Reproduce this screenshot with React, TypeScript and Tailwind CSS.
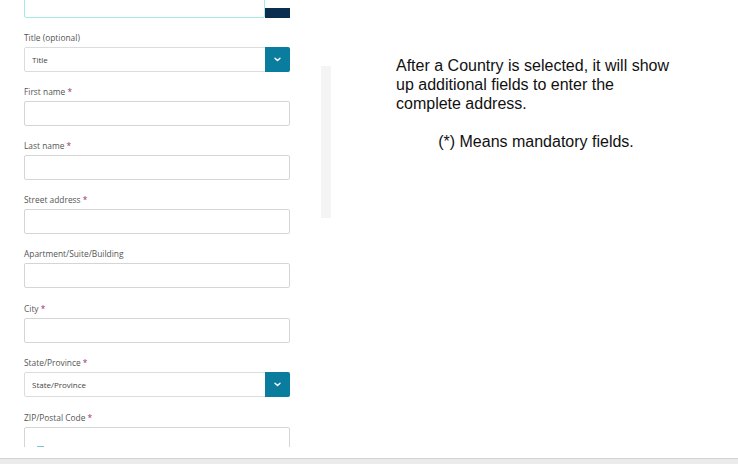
import React from "react";

const Chevron = () => (
  <svg width="7" height="5" viewBox="0 0 7 5" fill="none">
    <path d="M1 1.2 L3.5 3.6 L6 1.2" stroke="#ffffff" strokeWidth="1.4" strokeLinecap="round" strokeLinejoin="round" />
  </svg>
);

const Label = ({ text, req }: { text: string; req?: boolean }) => (
  <div className="h-[13px] pt-[1px] leading-[12px] text-[8.4px] text-[#555] mb-[3px] whitespace-nowrap">
    {text}
    {req && <span className="text-[#a0306e]"> *</span>}
  </div>
);

const Input = ({ children }: { children?: React.ReactNode }) => (
  <div className="relative h-[25px] w-full rounded-[2px] border border-[#d5d5d5] bg-white">{children}</div>
);

const Select = ({ value }: { value: string }) => (
  <div className="flex h-[25px] w-full rounded-[2px] border border-[#dcdcdc] bg-white">
    <div className="flex-1 pl-[7px] text-[8px] leading-[23px] text-[#444]">{value}</div>
    <div className="flex w-[25px] -my-px -mr-px items-center justify-center rounded-r-[2px] bg-[#0a7d9e]">
      <Chevron />
    </div>
  </div>
);

const Field = ({ children, extra }: { children: React.ReactNode; extra?: boolean }) => (
  <div className={extra ? "mt-[14px]" : "mt-[13px]"}>{children}</div>
);

export default function App() {
  return (
    <div className="flex h-[464px] w-[738px] flex-col overflow-hidden bg-white" style={{ fontFamily: '"Open Sans", sans-serif' }}>
      <div className="flex flex-1 min-h-0">
        <div className="h-[447px] w-[290px] shrink-0 overflow-hidden pl-[24px]">
          <div className="mt-[-7px] flex h-[25px] items-end">
            <div className="h-full flex-1 rounded-[2px] border border-[#a6ebe5]" />
            <div className="h-[10px] w-[25px] bg-[#0b2d50]" />
          </div>
          <Field>
            <Label text="Title (optional)" />
            <Select value="Title" />
          </Field>
          <Field>
            <Label text="First name" req />
            <Input />
          </Field>
          <Field>
            <Label text="Last name" req />
            <Input />
          </Field>
          <Field>
            <Label text="Street address" req />
            <Input />
          </Field>
          <Field>
            <Label text="Apartment/Suite/Building" />
            <Input />
          </Field>
          <Field extra>
            <Label text="City" req />
            <Input />
          </Field>
          <Field>
            <Label text="State/Province" req />
            <Select value="State/Province" />
          </Field>
          <Field extra>
            <Label text="ZIP/Postal Code" req />
            <Input>
              <div className="absolute left-[12px] top-[18px] h-[1px] w-[7px] bg-[#7fc4d8]" />
            </Input>
          </Field>
        </div>
        <div className="ml-[31px] mt-[66px] h-[152px] w-[10px] shrink-0 bg-[#f4f4f4]" />
        <div className="ml-[65px] mt-[56px] w-[280px] text-[16px] leading-[19px] text-[#111]" style={{ fontFamily: '"Liberation Sans", Arial, sans-serif' }}>
          <p>After a Country is selected, it will show up additional fields to enter the complete address.</p>
          <p className="mt-[19px] text-center">(*) Means mandatory fields.</p>
        </div>
      </div>
      <div className="mt-[11px] h-[6px] shrink-0 border-t border-[#d2d2d2] bg-[#ebebeb]" />
    </div>
  );
}
